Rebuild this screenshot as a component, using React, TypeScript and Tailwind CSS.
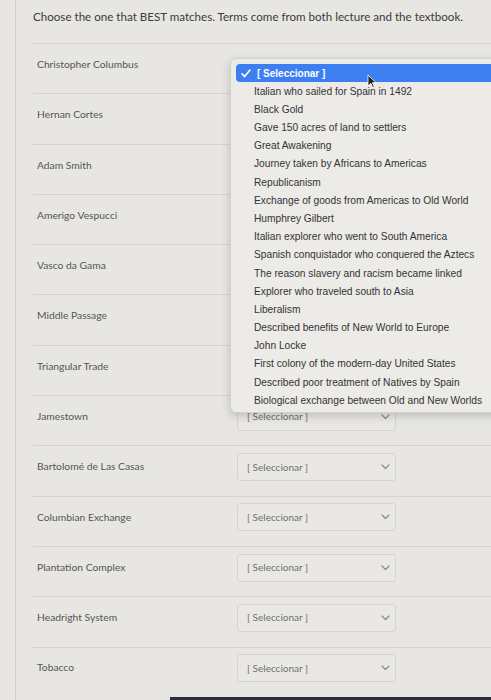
import React from "react";

const rows = [
  "Christopher Columbus",
  "Hernan Cortes",
  "Adam Smith",
  "Amerigo Vespucci",
  "Vasco da Gama",
  "Middle Passage",
  "Triangular Trade",
  "Jamestown",
  "Bartolomé de Las Casas",
  "Columbian Exchange",
  "Plantation Complex",
  "Headright System",
  "Tobacco",
];

const options = [
  "Italian who sailed for Spain in 1492",
  "Black Gold",
  "Gave 150 acres of land to settlers",
  "Great Awakening",
  "Journey taken by Africans to Americas",
  "Republicanism",
  "Exchange of goods from Americas to Old World",
  "Humphrey Gilbert",
  "Italian explorer who went to South America",
  "Spanish conquistador who conquered the Aztecs",
  "The reason slavery and racism became linked",
  "Explorer who traveled south to Asia",
  "Liberalism",
  "Described benefits of New World to Europe",
  "John Locke",
  "First colony of the modern-day United States",
  "Described poor treatment of Natives by Spain",
  "Biological exchange between Old and New Worlds",
];

function Chevron() {
  return (
    <svg width="9" height="6" viewBox="0 0 9 6" fill="none">
      <path d="M1 1l3.5 3.5L8 1" stroke="#8a8a8a" strokeWidth="1.2" strokeLinecap="round" strokeLinejoin="round" />
    </svg>
  );
}

export default function App() {
  return (
    <div className="relative w-[491px] h-[700px] overflow-hidden bg-[#e7e6e3] font-['Lato','Liberation_Sans',sans-serif]">
      <div className="ml-[15px] h-full border-l border-[#cfceca] pl-[17px]">
        <div className="h-[43px] pt-[9px] text-[11.6px] leading-[16px] text-[#3b3b3b] whitespace-nowrap">
          Choose the one that BEST matches. Terms come from both lecture and the textbook.
        </div>
        {rows.map((r, i) => (
          <div key={r} className="flex h-[50.3px] items-center border-t border-[#d4d3cf] pb-[8px]">
            <div className="w-[204px] pl-[4px] text-[10.3px] text-[#555]">{r}</div>
            <div
              className={
                i < 7
                  ? "invisible flex h-[28px] w-[159px] items-center justify-between rounded-[3px] border border-[#d6d5d1] bg-[#e9e8e5] pl-[9px] pr-[5px]"
                  : "flex h-[28px] w-[159px] items-center justify-between rounded-[3px] border border-[#d6d5d1] bg-[#e9e8e5] pl-[9px] pr-[5px]"
              }
            >
              <span className="text-[10px] text-[#6f6f6f]">[ Seleccionar ]</span>
              <Chevron />
            </div>
          </div>
        ))}
      </div>

      <div className="absolute left-[230px] top-[58px] h-[355px] w-[275px] rounded-[6px] border border-[#d2d1cd] bg-[#ecebe8] pt-[5px] shadow-[0_3px_10px_rgba(0,0,0,0.18)] font-['Liberation_Sans','Noto_Sans',sans-serif]">
        <div className="ml-[5px] flex h-[18.2px] items-center rounded-[4px] bg-[#3d7ff0] pl-[5px] text-[10px] text-white">
          <svg width="10" height="9" viewBox="0 0 10 9" className="mr-[6px]">
            <path d="M1 4.8l2.6 2.8L9 1" stroke="white" strokeWidth="1.6" fill="none" strokeLinecap="round" strokeLinejoin="round" />
          </svg>
          <span className="font-semibold">[ Seleccionar ]</span>
        </div>
        {options.map((o) => (
          <div key={o} className="flex h-[18.2px] items-center pl-[23px] text-[10.2px] text-[#333] whitespace-nowrap">
            {o}
          </div>
        ))}
      </div>

      <svg className="absolute left-[367px] top-[74px]" width="10" height="14" viewBox="0 0 10 14">
        <path d="M1 1v11l2.8-2.6 1.9 4 1.6-.8-1.9-3.9H9z" fill="#222" stroke="white" strokeWidth="0.8" />
      </svg>

      <div className="absolute bottom-0 left-[170px] h-[3px] w-[321px] bg-[#2e2c38]" />
    </div>
  );
}
